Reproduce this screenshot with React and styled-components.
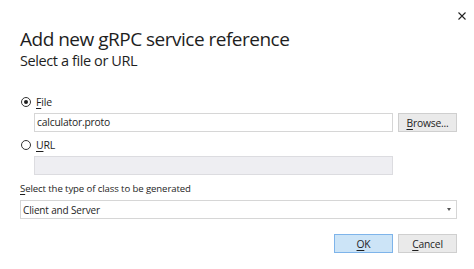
import React from 'react';
import styled, { createGlobalStyle } from 'styled-components';

const GlobalStyle = createGlobalStyle`
    html, body {
        margin: 0;
        padding: 0;
        background: #ffffff;
    }
    body {
        font-family: 'Open Sans', 'Noto Sans', sans-serif;
        color: #1e1e1e;
    }
`;

const Dialog = styled.div`
    width: 474px;
    height: 269px;
    box-sizing: border-box;
    display: flex;
    flex-direction: column;
    background: #ffffff;
`;

const TitleBar = styled.div`
    display: flex;
    justify-content: flex-end;
    height: 27px;
    padding: 6px 2px 0 0;
    box-sizing: border-box;
`;

const CloseButton = styled.div`
    width: 20px;
    height: 20px;
    display: flex;
    align-items: center;
    justify-content: center;
`;

const Heading = styled.div`
    padding-left: 20px;
    display: flex;
    flex-direction: column;
`;

const Title = styled.h1`
    margin: 0;
    font-size: 19px;
    font-weight: 400;
    line-height: 25px;
    letter-spacing: -0.5px;
    color: #1e1e1e;
`;

const Subtitle = styled.h2`
    margin: 0;
    font-size: 14.5px;
    font-weight: 400;
    line-height: 18px;
    letter-spacing: -0.4px;
    color: #1e1e1e;
`;

const Form = styled.div`
    display: flex;
    flex-direction: column;
    padding: 24px 17px 0 20px;
`;

const RadioRow = styled.label`
    display: flex;
    align-items: center;
    gap: 5px;
    height: 16px;
    padding-left: 1px;
    font-size: 10.5px;
    letter-spacing: -0.2px;
    margin-top: ${p => p.$top || 0}px;
`;

const RadioCircle = styled.span`
    width: 8px;
    height: 8px;
    border: 1px solid #333;
    border-radius: 50%;
    display: flex;
    align-items: center;
    justify-content: center;
    box-sizing: content-box;
    &::after {
        content: '';
        width: 4px;
        height: 4px;
        border-radius: 50%;
        background: ${p => (p.$checked ? '#1e1e1e' : 'transparent')};
    }
`;

const Key = styled.span`
    text-decoration: underline;
    text-underline-offset: 2px;
`;

const FieldRow = styled.div`
    display: flex;
    gap: 5px;
    padding-left: 14px;
    margin-top: 3px;
`;

const TextBox = styled.div`
    width: 359px;
    height: 19px;
    box-sizing: border-box;
    border: 1px solid ${p => (p.$disabled ? '#dcdce0' : '#d6d6d6')};
    background: ${p => (p.$disabled ? '#eeeef2' : '#ffffff')};
    font-size: 10.3px;
    line-height: 17px;
    padding-left: 2px;
    letter-spacing: -0.2px;
`;

const Button = styled.div`
    width: ${p => p.$width || 59}px;
    height: ${p => p.$height || 19}px;
    box-sizing: border-box;
    border: 1px solid ${p => (p.$primary ? '#7eb4ea' : '#cfcfcf')};
    background: ${p => (p.$primary ? '#cce4f7' : '#eaeaea')};
    font-size: 10.3px;
    letter-spacing: -0.2px;
    display: flex;
    align-items: center;
    justify-content: center;
    color: #1e1e1e;
`;

const Label = styled.div`
    font-size: 9.6px;
    line-height: 16px;
    margin-top: 6px;
    letter-spacing: -0.1px;
`;

const Select = styled.div`
    width: 437px;
    height: 19px;
    box-sizing: border-box;
    margin-top: 3px;
    border: 1px solid #d6d6d6;
    display: flex;
    align-items: center;
    justify-content: space-between;
    padding: 0 5px 0 2px;
    font-size: 10px;
    letter-spacing: -0.15px;
`;

const Arrow = styled.span`
    width: 0;
    height: 0;
    border-left: 2.5px solid transparent;
    border-right: 2.5px solid transparent;
    border-top: 3px solid #555;
`;

const Footer = styled.div`
    display: flex;
    justify-content: flex-end;
    gap: 5px;
    padding: 15px 17px 0 0;
`;

export default function App() {
    return (
        <Dialog>
            <GlobalStyle />
            <TitleBar>
                <CloseButton>
                    <svg width="8" height="8" viewBox="0 0 8 8">
                        <path d="M0.5 0.5 L7.5 7.5 M7.5 0.5 L0.5 7.5" stroke="#222" strokeWidth="1.1" />
                    </svg>
                </CloseButton>
            </TitleBar>
            <Heading>
                <Title>Add new gRPC service reference</Title>
                <Subtitle>Select a file or URL</Subtitle>
            </Heading>
            <Form>
                <RadioRow>
                    <RadioCircle $checked />
                    <span><Key>F</Key>ile</span>
                </RadioRow>
                <FieldRow>
                    <TextBox>calculator.proto</TextBox>
                    <Button><span><Key>B</Key>rowse...</span></Button>
                </FieldRow>
                <RadioRow $top={5}>
                    <RadioCircle />
                    <span><Key>U</Key>RL</span>
                </RadioRow>
                <FieldRow>
                    <TextBox $disabled />
                </FieldRow>
                <Label><Key>S</Key>elect the type of class to be generated</Label>
                <Select>
                    <span>Client and Server</span>
                    <Arrow />
                </Select>
            </Form>
            <Footer>
                <Button $primary><span><Key>O</Key>K</span></Button>
                <Button><span><Key>C</Key>ancel</span></Button>
            </Footer>
        </Dialog>
    );
}
